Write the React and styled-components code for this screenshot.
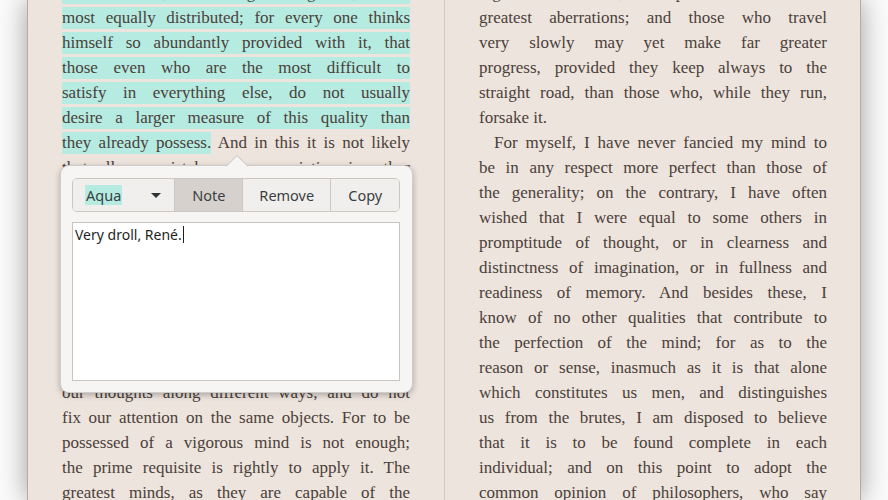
import React from "react";
import styled, { createGlobalStyle } from "styled-components";

const Global = createGlobalStyle`
  html, body { margin: 0; padding: 0; height: 100%; }
  body {
    background: #fbfbfb;
    overflow: hidden;
    width: 888px;
    height: 500px;
  }
`;

const Stage = styled.div`
  position: relative;
  width: 888px;
  height: 500px;
  overflow: hidden;
`;

const Page = styled.div`
  margin-left: 27px;
  width: 834px;
  height: 500px;
  background: #ede4dd;
  border-left: 1px solid #b3aba5;
  border-right: 1px solid #b3aba5;
  box-shadow: 0 0 26px rgba(0, 0, 0, 0.38);
  display: flex;
  padding: 0 34px 0 34px;
  box-sizing: border-box;
  overflow: hidden;
`;

const Column = styled.div`
  width: 348px;
  flex: none;
  margin-top: -20px;
  font-family: "Liberation Serif", "Times New Roman", serif;
  font-size: 17px;
  line-height: 25px;
  color: #4b403a;
`;

const Divider = styled.div`
  width: 1px;
  flex: none;
  margin: 0 34px;
  background: #d2c9c2;
`;

const Line = styled.div`
  height: 25px;
  white-space: nowrap;
  text-align: ${(p) => (p.$last ? "left" : "justify")};
  text-align-last: ${(p) => (p.$last ? "left" : "justify")};
  padding-left: ${(p) => (p.$indent ? "15px" : "0")};
`;

const Mark = styled.span`
  background: #b5ebe1;
  padding: 1px 0 2px;
`;

const Popover = styled.div`
  position: absolute;
  left: 60px;
  top: 165px;
  width: 353px;
  height: 228px;
  box-sizing: border-box;
  background: #f6f5f4;
  border: 1px solid rgba(0, 0, 0, 0.16);
  border-radius: 9px;
  box-shadow: 0 2px 6px rgba(0, 0, 0, 0.28);
  padding: 12px 12px 11px 11px;
  display: flex;
  flex-direction: column;
  gap: 10px;
  font-family: "Noto Sans", "Open Sans", sans-serif;
  color: #2e3436;

  &::before {
    content: "";
    position: absolute;
    left: 168px;
    top: -8px;
    width: 15px;
    height: 15px;
    background: #f6f5f4;
    border-left: 1px solid rgba(0, 0, 0, 0.16);
    border-top: 1px solid rgba(0, 0, 0, 0.16);
    transform: rotate(45deg);
  }
`;

const ButtonGroup = styled.div`
  display: flex;
  height: 34px;
  border: 1px solid #cdc7c2;
  border-radius: 5px;
  overflow: hidden;
  box-sizing: border-box;
  flex: none;
`;

const Button = styled.div`
  width: ${(p) => p.$w}px;
  box-sizing: border-box;
  display: flex;
  align-items: center;
  justify-content: ${(p) => (p.$spread ? "space-between" : "center")};
  padding: ${(p) => (p.$spread ? "0 12px 0 12px" : "0")};
  font-size: 14.5px;
  background: ${(p) => (p.$active ? "#d6d1cc" : "#f1efed")};
  border-left: ${(p) => (p.$first ? "none" : "1px solid #cdc7c2")};
  color: #3a3f41;
`;

const Swatch = styled.span`
  background: #b5ebe1;
  padding: 0 1px;
`;

const Caret = styled.span`
  width: 0;
  height: 0;
  border-left: 5px solid transparent;
  border-right: 5px solid transparent;
  border-top: 5px solid #2e3436;
  margin-right: 1px;
`;

const Editor = styled.div`
  flex: 1;
  background: #ffffff;
  border: 1px solid #c9c4bf;
  padding: 2px 2px;
  font-size: 14px;
  line-height: 20px;
  color: #1f1f1f;
`;

const Cursor = styled.span`
  display: inline-block;
  width: 1px;
  height: 17px;
  background: #1f1f1f;
  vertical-align: -3px;
  margin-left: 1px;
`;

const left = [
  { t: [["m", "Good sense is, of all things among men, the al-"]] },
  { t: [["m", "most equally distributed; for every one thinks"]] },
  { t: [["m", "himself so abundantly provided with it, that"]] },
  { t: [["m", "those even who are the most difficult to"]] },
  { t: [["m", "satisfy in everything else, do not usually"]] },
  { t: [["m", "desire a larger measure of this quality than"]] },
  { t: [["m", "they already possess."], ["", " And in this it is not likely"]] },
  { t: [["", "that all are mistaken: the conviction is rather"]] },
  { t: [["", "to be held as testifying that the power of"]] },
  { t: [["", "judging aright and of distinguishing truth"]] },
  { t: [["", "from error, which is properly what is called"]] },
  { t: [["", "good sense or reason, is by nature equal in all"]] },
  { t: [["", "men; and that the diversity of our opinions,"]] },
  { t: [["", "consequently, does not arise from some being"]] },
  { t: [["", "endowed with a larger share of reason than"]] },
  { t: [["", "others, but solely from this, that we conduct"]] },
  { t: [["", "our thoughts along different ways, and do not"]] },
  { t: [["", "fix our attention on the same objects. For to be"]] },
  { t: [["", "possessed of a vigorous mind is not enough;"]] },
  { t: [["", "the prime requisite is rightly to apply it. The"]] },
  { t: [["", "greatest minds, as they are capable of the"]] },
];

const right = [
  { t: "highest excellences, are open likewise to the" },
  { t: "greatest aberrations; and those who travel" },
  { t: "very slowly may yet make far greater" },
  { t: "progress, provided they keep always to the" },
  { t: "straight road, than those who, while they run," },
  { t: "forsake it.", last: true },
  { t: "For myself, I have never fancied my mind to", indent: true },
  { t: "be in any respect more perfect than those of" },
  { t: "the generality; on the contrary, I have often" },
  { t: "wished that I were equal to some others in" },
  { t: "promptitude of thought, or in clearness and" },
  { t: "distinctness of imagination, or in fullness and" },
  { t: "readiness of memory. And besides these, I" },
  { t: "know of no other qualities that contribute to" },
  { t: "the perfection of the mind; for as to the" },
  { t: "reason or sense, inasmuch as it is that alone" },
  { t: "which constitutes us men, and distinguishes" },
  { t: "us from the brutes, I am disposed to believe" },
  { t: "that it is to be found complete in each" },
  { t: "individual; and on this point to adopt the" },
  { t: "common opinion of philosophers, who say" },
];

export default function App() {
  return (
    <Stage>
      <Global />
      <Page>
        <Column>
          {left.map((l, i) => (
            <Line key={i}>
              {l.t.map(([k, s], j) =>
                k === "m" ? <Mark key={j}>{s}</Mark> : <span key={j}>{s}</span>
              )}
            </Line>
          ))}
        </Column>
        <Divider />
        <Column>
          {right.map((l, i) => (
            <Line key={i} $last={l.last} $indent={l.indent}>
              {l.t}
            </Line>
          ))}
        </Column>
      </Page>
      <Popover>
        <ButtonGroup>
          <Button $w={102} $first $spread>
            <Swatch>Aqua</Swatch>
            <Caret />
          </Button>
          <Button $w={68} $active>Note</Button>
          <Button $w={89}>Remove</Button>
          <Button $w={69}>Copy</Button>
        </ButtonGroup>
        <Editor>
          Very droll, René.<Cursor />
        </Editor>
      </Popover>
    </Stage>
  );
}
